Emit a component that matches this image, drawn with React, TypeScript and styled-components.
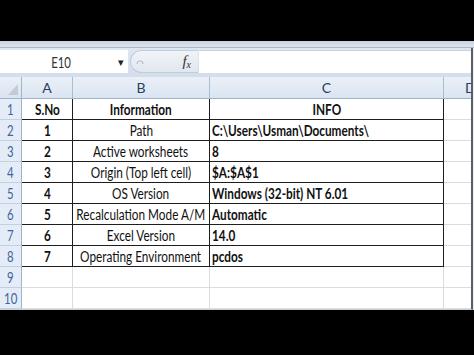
import * as React from "react";
import styled, { createGlobalStyle } from "styled-components";

// the capture is squashed sideways, so sheet text is drawn narrower than it is tall
const sheetFont = `Lato, "Open Sans", "Liberation Sans", sans-serif`;
const SQUASH = 0.76;

const GlobalStyle = createGlobalStyle`
    html, body {
        margin: 0;
        padding: 0;
        background: #000;
    }
`;

type Align = "left" | "center";

interface RowData {
    a: string;
    b: string;
    c: string;
    header?: boolean;
}

const rows: RowData[] = [
    { a: "S.No", b: "Information", c: "INFO", header: true },
    { a: "1", b: "Path", c: "C:\\Users\\Usman\\Documents\\" },
    { a: "2", b: "Active worksheets", c: "8" },
    { a: "3", b: "Origin (Top left cell)", c: "$A:$A$1" },
    { a: "4", b: "OS Version", c: "Windows (32-bit) NT 6.01" },
    { a: "5", b: "Recalculation Mode A/M", c: "Automatic" },
    { a: "6", b: "Excel Version", c: "14.0" },
    { a: "7", b: "Operating Environment", c: "pcdos" },
    { a: "", b: "", c: "" },
    { a: "", b: "", c: "" },
];

const TABLE_ROWS = 8;

const App = (): JSX.Element => (
    <Screen>
        <GlobalStyle />
        <Letterbox $h={41} />
        <Window>
            <RibbonEdge />
            <FormulaBar>
                <NameBox>
                    <NameText><Squash $align="center">E10</Squash></NameText>
                    <DropArrow>▾</DropArrow>
                </NameBox>
                <FxPill>
                    <svg width="10" height="10" viewBox="0 0 10 10">
                        <path d="M2 7 A3 3 0 0 1 8 7" fill="none" stroke="#b3bdc9" strokeWidth="1.2" />
                    </svg>
                    <Fx>f<sub>x</sub></Fx>
                </FxPill>
                <FormulaInput />
            </FormulaBar>
            <Grid>
                <Corner>
                    <svg width="10" height="11" viewBox="0 0 10 11">
                        <polygon points="10,0 10,11 0,11" fill="#c4cbd4" />
                    </svg>
                </Corner>
                <ColHead>A</ColHead>
                <ColHead>B</ColHead>
                <ColHead>C</ColHead>
                <ColHead $last>D</ColHead>
                {rows.map((r, i) => {
                    const inTable = i < TABLE_ROWS;
                    const cAlign: Align = r.header ? "center" : "left";
                    return (
                        <React.Fragment key={i}>
                            <RowHead><Squash $align="center">{i + 1}</Squash></RowHead>
                            <Cell $ruled={inTable} $bold $align="center">
                                <Squash $align="center">{r.a}</Squash>
                            </Cell>
                            <Cell $ruled={inTable} $bold={!!r.header} $align="center">
                                <Squash $align="center">{r.b}</Squash>
                            </Cell>
                            <Cell $ruled={inTable} $bold $align={cAlign}>
                                <Squash $align={cAlign}>{r.c}</Squash>
                            </Cell>
                            <Cell $last />
                        </React.Fragment>
                    );
                })}
            </Grid>
        </Window>
        <Letterbox $h={45} />
    </Screen>
);

export default App;


const Screen = styled.div`
    width: 474px;
    height: 355px;
    background: #000;
    display: flex;
    flex-direction: column;
    overflow: hidden;
`;

const Letterbox = styled.div<{ $h: number }>`
    height: ${p => p.$h}px;
    flex: none;
    background: #000;
`;

const Squash = styled.span<{ $align: Align }>`
    display: inline-block;
    white-space: nowrap;
    transform: scaleX(${SQUASH});
    transform-origin: ${p => (p.$align === "left" ? "left center" : "center center")};
`;

const Window = styled.div`
    height: 269px;
    background: #fff;
    display: flex;
    flex-direction: column;
    border-right: 1px solid #e8ecf1;
    box-sizing: border-box;
`;

const RibbonEdge = styled.div`
    height: 7px;
    box-sizing: border-box;
    background: linear-gradient(#c9d3df, #dde4ee);
    border-bottom: 1px solid #aab8ca;
    margin-right: -1px;
`;

const FormulaBar = styled.div`
    height: 29px;
    box-sizing: border-box;
    display: flex;
    align-items: stretch;
    padding: 2px 0 4px;
    background: linear-gradient(#dfe7f1, #d3deeb);
    border-right: 2px solid #5c5f63;
`;

const NameBox = styled.div`
    width: 128px;
    background: #fff;
    display: flex;
    align-items: center;
    font-family: ${sheetFont};
    font-size: 15px;
    color: #333;
`;

const NameText = styled.span`
    flex: 1;
    display: flex;
    justify-content: center;
    padding-left: 4px;
`;

const DropArrow = styled.span`
    width: 10px;
    font-size: 11px;
    color: #222;
`;

const FxPill = styled.div`
    width: 68px;
    margin-left: 2px;
    display: flex;
    align-items: center;
    justify-content: space-between;
    padding: 0 7px 0 4px;
    box-sizing: border-box;
    border-radius: 12px 0 0 12px;
    border: 1px solid #c2cdda;
    border-right: none;
    background: linear-gradient(#f1f4f8, #e1e7ef);
`;

const Fx = styled.span`
    font-family: "Liberation Serif", serif;
    font-style: italic;
    font-size: 15px;
    color: #333;

    & > sub {
        font-size: 10px;
        vertical-align: -2px;
    }
`;

const FormulaInput = styled.div`
    flex: 1;
    margin-left: 1px;
    background: #fff;
    border-top: 1px solid #c9d4e1;
`;

const Grid = styled.div`
    display: grid;
    grid-template-columns: 22px 51px 137px 234px 27px;
    grid-template-rows: 22px repeat(10, 21px);
    border-right: 2px solid #5c5f63;
    border-bottom: 1px solid #c8cfd8;
    width: 473px;
    box-sizing: border-box;
`;

const headBg = `linear-gradient(#eaf0f8, #dae4f1)`;

const Corner = styled.div`
    background: ${headBg};
    border-right: 1px solid #9fb4cc;
    border-bottom: 1px solid #9fb4cc;
    display: flex;
    align-items: flex-end;
    justify-content: flex-end;
    padding: 0 3px 3px 0;
`;

const ColHead = styled.div<{ $last?: boolean }>`
    background: ${headBg};
    border-right: ${p => (p.$last ? "none" : "1px solid #a9bdd3")};
    border-bottom: 1px solid #9fb4cc;
    display: flex;
    align-items: center;
    justify-content: ${p => (p.$last ? "flex-start" : "center")};
    padding-left: ${p => (p.$last ? "21px" : "0")};
    font-family: ${sheetFont};
    font-size: 14px;
    color: #2a3f5f;
    overflow: hidden;
`;

const RowHead = styled.div`
    background: #e4ecf7;
    border-right: 1px solid #9fb4cc;
    border-bottom: 1px solid #c3d0e0;
    display: flex;
    align-items: center;
    justify-content: center;
    font-family: ${sheetFont};
    font-size: 15px;
    color: #43649a;
`;

const Cell = styled.div<{ $ruled?: boolean; $bold?: boolean; $align?: Align; $last?: boolean }>`
    border-right: ${p => (p.$last ? "none" : p.$ruled ? "1px solid #1e1e1e" : "1px solid #dcdcdc")};
    border-bottom: ${p => (p.$ruled ? "1px solid #1e1e1e" : "1px solid #dcdcdc")};
    display: flex;
    align-items: center;
    justify-content: ${p => (p.$align === "left" ? "flex-start" : "center")};
    padding-left: ${p => (p.$align === "left" ? "2px" : "0")};
    font-family: ${sheetFont};
    font-size: 15.5px;
    font-weight: ${p => (p.$bold ? 700 : 400)};
    color: #111;
    overflow: visible;
    min-width: 0;
`;
